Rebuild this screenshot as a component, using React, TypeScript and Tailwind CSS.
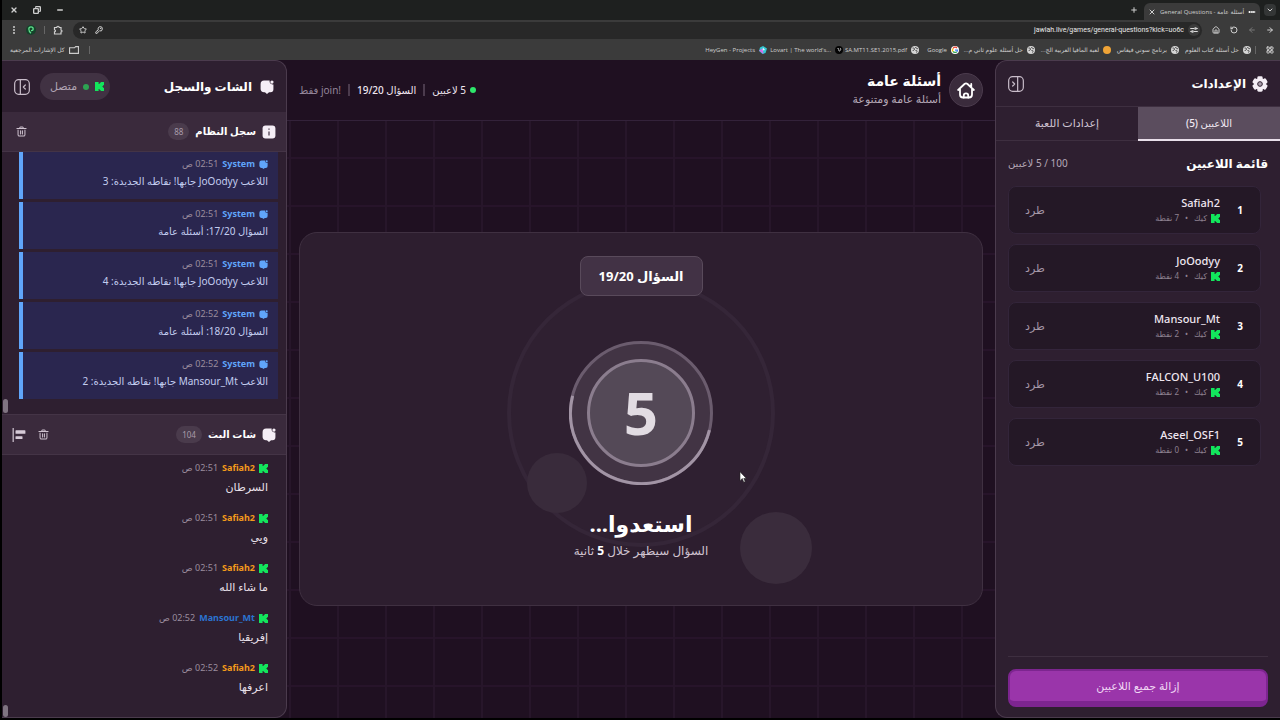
import { type ReactNode } from 'react'
import clsx from 'clsx'
import { ArrowLeft, ArrowRight, ChevronDown, Copy, House, KeyRound, LayoutGrid, Minus, Plus, RotateCcw, Star, X } from 'lucide-react'

interface Message {
  user: string
  time: string
  text: string
}

const systemLog: Message[] = [
  { user: 'System', time: '02:51 ص', text: 'اللاعب JoOodyy جابها! نقاطه الجديدة: 3' },
  { user: 'System', time: '02:51 ص', text: 'السؤال 17/20: أسئلة عامة' },
  { user: 'System', time: '02:51 ص', text: 'اللاعب JoOodyy جابها! نقاطه الجديدة: 4' },
  { user: 'System', time: '02:52 ص', text: 'السؤال 18/20: أسئلة عامة' },
  { user: 'System', time: '02:52 ص', text: 'اللاعب Mansour_Mt جابها! نقاطه الجديدة: 2' }
]

const chat: Message[] = [
  { user: 'Safiah2', time: '02:51 ص', text: 'السرطان' },
  { user: 'Safiah2', time: '02:51 ص', text: 'ويي' },
  { user: 'Safiah2', time: '02:51 ص', text: 'ما شاء الله' },
  { user: 'Mansour_Mt', time: '02:52 ص', text: 'إفريقيا' },
  { user: 'Safiah2', time: '02:52 ص', text: 'اعرفها' }
]

const userColors: Record<string, string> = {
  Safiah2: 'text-[#f59a1b]',
  Mansour_Mt: 'text-[#2b74d1]'
}

const players = [
  { name: 'Safiah2', points: 7 },
  { name: 'JoOodyy', points: 4 },
  { name: 'Mansour_Mt', points: 2 },
  { name: 'FALCON_U100', points: 2 },
  { name: 'Aseel_OSF1', points: 0 }
]

function KickLogo({ className }: { className?: string }) {
  return (
    <svg viewBox="0 0 9 9" className={className} fill="#12e65c" aria-hidden="true">
      <path d="M0 0h3.6v2h1V1h1V0H9v3.2H8v1H7v.6h1v1h1V9H5.6V8h-1V7h-1v2H0z" />
    </svg>
  )
}

function ChatIcon({ className }: { className?: string }) {
  return (
    <svg viewBox="0 0 24 24" className={className} fill="currentColor" aria-hidden="true">
      <path d="M7 1h9.500c-.8 3.500 1.500 6.500 5 6.500H23V16a5 5 0 0 1-5 5h-2.500L12 24l-3.500-3H7a6 6 0 0 1-6-5V7a6 6 0 0 1 6-6z" />
      <circle cx="20.500" cy="3.500" r="2.800" />
    </svg>
  )
}

function InfoIcon({ className }: { className?: string }) {
  return (
    <svg viewBox="0 0 24 24" className={className} aria-hidden="true">
      <rect x="1" y="1" width="22" height="22" rx="5" fill="#f5eef6" />
      <path d="M12 11v7M12 6v2" stroke="#3a2a3c" strokeWidth="2" />
    </svg>
  )
}

function GearIcon({ className }: { className?: string }) {
  return (
    <svg viewBox="0 0 24 24" className={className} fill="#f5eef6" aria-hidden="true">
      <circle cx="12" cy="12" r="9" />
      {[0, 60, 120].map((angle) => (
        <rect key={angle} x="8" y="0.500" width="8" height="23" rx="2" transform={`rotate(${angle} 12 12)`} />
      ))}
      <circle cx="12" cy="12" r="3.500" fill="#a99dab" stroke="#2e1f30" strokeWidth="1.500" />
    </svg>
  )
}

function PanelIcon({ className }: { className?: string }) {
  return (
    <svg viewBox="0 0 24 24" className={className} fill="none" stroke="#c9bdca" strokeWidth="1.800" aria-hidden="true">
      <rect x="1" y="1" width="22" height="22" rx="6" />
      <path d="M9.500 1v22" />
      <path d="m17 9-3 3 3 3" strokeLinecap="round" strokeLinejoin="round" />
    </svg>
  )
}

function TrashIcon() {
  return (
    <svg viewBox="0 0 24 24" className="h-[11px] w-[11px]" fill="none" stroke="#cfc3d0" strokeWidth="2.200" strokeLinecap="round" aria-hidden="true">
      <path d="M2 5.500h20M8 5.500C8 2.500 9 2 10 2h4c1 0 2 .5 2 3.500M4.500 9v10a3 3 0 0 0 3 3h9a3 3 0 0 0 3-3V9M10 10.500v7M14 10.500v7" />
    </svg>
  )
}

function AlignIcon() {
  return (
    <svg viewBox="0 0 24 24" className="h-3.5 w-3.5" fill="#d6cad7" aria-hidden="true">
      <path d="M1 0h2v24H1z" />
      <rect x="6" y="4" width="17" height="6" rx="1" />
      <rect x="6" y="14" width="12" height="5" rx="1" />
    </svg>
  )
}

function HomeIcon() {
  return (
    <svg viewBox="0 0 24 24" className="h-[18px] w-[18px]" fill="none" stroke="#fff" strokeWidth="2.400" strokeLinecap="round" strokeLinejoin="round" aria-hidden="true">
      <path d="M1.500 12 10 4q2-1.700 4 0l8.500 8M19 8.500V4M4 10.500V18q0 4 4 4h8q4 0 4-4v-7.500" />
      <path d="M9 22v-2.500a3 3 0 0 1 6 0V22" />
    </svg>
  )
}

function ExtensionsIcon() {
  return (
    <svg viewBox="0 0 20 20" className="h-2.5 w-2.5" fill="none" stroke="#cfcfcf" strokeWidth="2.400" aria-hidden="true">
      <path d="M3 5h4.500a2.500 2.500 0 0 1 5 0H16v5a2 2 0 0 1 0 4v4H3v-4.500a2 2 0 0 0 0-4z" />
    </svg>
  )
}

function GlobeIcon() {
  return (
    <svg viewBox="0 0 16 16" className="h-2 w-2 shrink-0" aria-hidden="true">
      <circle cx="8" cy="8" r="8" fill="#d5d5d5" />
      <path d="M3 4c3 0 5 1 4 3s-3 1-4 3M9 2c0 3 3 2 5 4M9 9c3-1 4 1 2 4" fill="none" stroke="#444" strokeWidth="2" />
    </svg>
  )
}

function GoogleIcon() {
  return (
    <svg viewBox="0 0 16 16" className="h-2 w-2 shrink-0" fill="none" strokeWidth="2.500" aria-hidden="true">
      <circle cx="8" cy="8" r="8" fill="#fff" />
      <path d="M4 5a5 5 0 0 1 8-1" stroke="#ea4335" />
      <path d="M4 11a5 5 0 0 1 0-6" stroke="#fbbc05" />
      <path d="M11.500 11.500A5 5 0 0 1 4 11" stroke="#34a853" />
      <path d="M8 8h5a5 5 0 0 1-1.500 3.500" stroke="#4285f4" />
    </svg>
  )
}

const bookmarks: { label: string; icon: ReactNode; width: string; ltr?: boolean }[] = [
  { label: 'حل أسئلة كتاب العلوم', icon: <GlobeIcon />, width: 'w-14' },
  { label: 'برنامج سوني فيغاس', icon: <GlobeIcon />, width: 'w-13' },
  {
    label: 'لعبة المافيا العربية الج...',
    icon: <span className="h-2 w-2 shrink-0 rounded-full bg-[#f0a437]" />,
    width: 'w-15'
  },
  { label: 'حل أسئلة علوم ثاني م...', icon: <GlobeIcon />, width: 'w-15' },
  { label: 'Google', icon: <GoogleIcon />, width: 'w-6', ltr: true },
  { label: 'SA.MT11.SE1.2015.pdf', icon: <GlobeIcon />, width: 'w-15', ltr: true },
  {
    label: "Lovart | The world's...",
    icon: (
      <svg viewBox="0 0 16 16" className="h-2 w-2 shrink-0" aria-hidden="true">
        <circle cx="8" cy="8" r="8" fill="#050505" />
        <path d="M5 5c4-2 1 6 4 5s3-5 1-6" fill="none" stroke="#eee" strokeWidth="1.500" />
      </svg>
    ),
    width: 'w-15',
    ltr: true
  },
  {
    label: 'HeyGen - Projects',
    icon: (
      <svg viewBox="0 0 16 16" className="h-2 w-2 shrink-0" aria-hidden="true">
        <path d="M8 0l8 5-3 9-6 2-7-6 2-7z" fill="#32c8d4" />
        <path d="M0 9l7-4 2 11z" fill="#d26be8" />
        <path d="M8 3l4 5-5 1z" fill="#e9f6ff" />
      </svg>
    ),
    width: 'w-13',
    ltr: true
  }
]

function BrowserChrome() {
  return (
    <div className="h-[60px] shrink-0 bg-[#3b3b3b] font-['Open_Sans','DejaVu_Sans',sans-serif] text-[6px] leading-3 text-[#cfcfcf]">
      <div className="flex h-5 items-end bg-[#1e201f] pl-2 pr-1">
        <button aria-label="Search tabs" className="mb-1 flex h-3 w-3 items-center justify-center rounded bg-[#343636]">
          <ChevronDown className="h-2 w-2" strokeWidth={3} />
        </button>
        <div className="ml-1.5 mr-1 flex h-[17px] w-[116px] items-center gap-1 rounded-t-md bg-[#3b3b3b] px-1">
          <svg viewBox="0 0 16 8" className="h-1 w-2" aria-hidden="true">
            <path d="M1 4h14M3 2v4M8 2v4M12 2v4" stroke="#fff" strokeWidth="2" />
          </svg>
          <span className="flex-1 whitespace-nowrap">أسئلة عامة - General Questions</span>
          <button aria-label="Close tab">
            <X className="h-2 w-2" strokeWidth={3} />
          </button>
        </div>
        <button aria-label="New tab" className="mb-1.5">
          <Plus className="h-2 w-2" strokeWidth={3} />
        </button>
        <div className="mb-1.5 mr-auto flex gap-[15px]">
          <button aria-label="Minimize">
            <Minus className="h-2 w-2" strokeWidth={4} />
          </button>
          <button aria-label="Restore">
            <Copy className="h-2 w-2 -scale-x-100" strokeWidth={4} />
          </button>
          <button aria-label="Close">
            <X className="h-2 w-2" strokeWidth={4} />
          </button>
        </div>
      </div>
      <div className="flex h-5 items-center gap-2.5 pl-2 pr-1.5">
        <button aria-label="Forward">
          <ArrowRight className="h-2 w-2" strokeWidth={3} />
        </button>
        <button aria-label="Back">
          <ArrowLeft className="h-2 w-2 text-[#777]" strokeWidth={3} />
        </button>
        <button aria-label="Reload">
          <RotateCcw className="h-2 w-2" strokeWidth={3} />
        </button>
        <button aria-label="Home">
          <House className="h-2 w-2" strokeWidth={3} />
        </button>
        <div className="flex h-[17px] flex-1 items-center gap-2 rounded-full bg-[#282828] pl-1.5 pr-0.5">
          <svg viewBox="0 0 16 16" className="h-3 w-3 rounded-full bg-[#3b3b3b]" fill="none" stroke="#ddd" strokeWidth="1.500" aria-hidden="true">
            <path d="M3 6h5M11 6h2M3 10h2M8 10h5" />
            <circle cx="10" cy="6" r="1" />
            <circle cx="6" cy="10" r="1" />
          </svg>
          <input
            aria-label="Address"
            dir="ltr"
            readOnly
            value="jawlah.live/games/general-questions?kick=uo6c"
            className="-mr-1 min-w-0 flex-1 bg-transparent text-right font-[Roboto,sans-serif] text-[7px] text-[#e8e8e8] outline-none"
          />
          <KeyRound className="h-2 w-2" strokeWidth={3} />
          <Star className="h-2 w-2" strokeWidth={3} />
        </div>
        <div className="flex items-center gap-2">
          <ExtensionsIcon />
          <div className="h-2 w-px bg-[#666]" />
          <svg viewBox="0 0 16 16" className="h-2.5 w-2.5" aria-hidden="true">
            <circle cx="8" cy="8" r="8" fill="#14432a" />
            <path d="M8 13C5 11 4.500 9 4.500 6.500a3.500 3.500 0 0 1 7 0C11.500 9 10 9 8 9" fill="none" stroke="#5fe08c" strokeWidth="2" />
          </svg>
          <button aria-label="Menu" className="flex w-2 flex-col items-center gap-px">
            <span className="h-0.5 w-0.5 rounded-full bg-[#ccc]" />
            <span className="h-0.5 w-0.5 rounded-full bg-[#ccc]" />
            <span className="h-0.5 w-0.5 rounded-full bg-[#ccc]" />
          </button>
        </div>
      </div>
      <div className="flex h-5 items-center pl-2 pr-1.5">
        <LayoutGrid className="h-2 w-2" strokeWidth={3} />
        <div className="ml-1 mr-2.5 h-2 w-px bg-[#666]" />
        {bookmarks.map((b) => (
          <a key={b.label} href="#" className="ml-1 flex shrink-0 items-center gap-1">
            {b.icon}
            <span className={clsx('flex', b.width)}>
              <span dir={b.ltr ? 'ltr' : 'rtl'} className="whitespace-nowrap">
                {b.label}
              </span>
            </span>
          </a>
        ))}
        <div className="ml-2.5 mr-auto h-2 w-px bg-[#666]" />
        <a href="#" className="flex items-center gap-1">
          <svg viewBox="0 0 18 14" className="h-2 w-2.5" fill="none" stroke="#ccc" strokeWidth="2" aria-hidden="true">
            <path d="M1 3h9l2-2h5v12H1z" />
          </svg>
          كل الإشارات المرجعية
        </a>
      </div>
    </div>
  )
}

function MessageHead({ message, system }: { message: Message; system?: boolean }) {
  return (
    <div className="flex items-center gap-1 text-[9px] leading-[14px]">
      {system ? <ChatIcon className="h-[9px] w-[9px] text-[#60a5fa]" /> : <KickLogo className="h-[9px] w-[9px]" />}
      <span className={clsx('font-bold', system ? 'text-[#60a5fa]' : userColors[message.user])}>{message.user}</span>
      <span className="text-[#9b8d9e]">{message.time}</span>
    </div>
  )
}

function ChatPanel() {
  return (
    <aside className="flex w-[285px] shrink-0 flex-col overflow-hidden rounded-r-xl border-y border-r border-[#4b3b4d] bg-[#2e1f30]">
      <div className="flex h-[51px] shrink-0 items-center px-3">
        <ChatIcon className="ml-2 h-3.5 w-3.5 text-[#f5eef6]" />
        <h2 className="text-xs font-bold">الشات والسجل</h2>
        <div className="mr-auto flex h-[27px] items-center gap-1.5 rounded-full bg-[#413243] pl-2.5 pr-1.5 text-[11px] text-[#b1a4b3]">
          <KickLogo className="h-[9px] w-[9px]" />
          <span className="h-1.5 w-1.5 rounded-full bg-[#2da352]" />
          متصل
        </div>
        <button aria-label="طي الشات" className="mr-2.5">
          <PanelIcon className="h-4 w-4" />
        </button>
      </div>
      <div className="flex h-10 shrink-0 items-center border-b border-[#443446] bg-[#3a2a3c] px-2.5 pl-3.5">
        <InfoIcon className="ml-1.5 h-3.5 w-3.5" />
        <h3 className="text-[10px] font-bold">سجل النظام</h3>
        <span className="mr-1.5 rounded-full bg-[#4a3b4c] px-1.5 text-[8px] leading-[17px] text-[#a99cab]">88</span>
        <button aria-label="مسح السجل" className="mr-auto">
          <TrashIcon />
        </button>
      </div>
      <div className="flex h-[262px] shrink-0">
        <ul className="flex flex-1 flex-col gap-[3px] overflow-hidden pl-2.5 pr-2">
          {systemLog.map((m, i) => (
            <li key={i} className="h-[47px] shrink-0 border-l-4 border-[#60a5fa] bg-[#2a264f] pr-2.5 pt-[5px] text-[10px] leading-4 text-[#c3cdf0]">
              <MessageHead message={m} system />
              <p className="mt-0.5">{m.text}</p>
            </li>
          ))}
        </ul>
        <div className="mb-px ml-px mr-px h-3.5 w-[5px] self-end rounded-full bg-[#7f7481]" />
      </div>
      <div className="flex h-[41px] shrink-0 items-center border-y border-[#443446] bg-[#3a2a3c] px-2.5">
        <ChatIcon className="ml-1.5 h-3.5 w-3.5 text-[#f5eef6]" />
        <h3 className="text-[10px] font-bold">شات البث</h3>
        <span className="mr-1.5 rounded-full bg-[#4a3b4c] px-1.5 text-[8px] leading-[17px] text-[#a99cab]">104</span>
        <button aria-label="مسح الشات" className="ml-3 mr-auto">
          <TrashIcon />
        </button>
        <button aria-label="محاذاة">
          <AlignIcon />
        </button>
      </div>
      <div className="flex min-h-0 flex-1">
        <ul className="flex flex-1 flex-col overflow-hidden pr-[18px] pt-1.5">
          {chat.map((m, i) => (
            <li key={i} className="h-[50px] shrink-0 text-[11px] leading-4 text-[#e9e0ea]">
              <MessageHead message={m} />
              <p className="mt-1">{m.text}</p>
            </li>
          ))}
        </ul>
        <div className="ml-px h-3 w-[5px] self-end rounded-full bg-[#7f7481]" />
      </div>
    </aside>
  )
}

function SettingsPanel() {
  return (
    <aside className="flex w-[285px] shrink-0 flex-col overflow-hidden rounded-l-xl border-y border-l border-[#4b3b4d] bg-[#2e1f30]">
      <div className="flex h-[45px] shrink-0 items-center px-3">
        <GearIcon className="ml-1.5 h-4 w-4" />
        <h2 className="text-xs font-bold">الإعدادات</h2>
        <button aria-label="طي الإعدادات" className="mr-auto">
          <PanelIcon className="h-4 w-4 rotate-180" />
        </button>
      </div>
      <div className="flex h-[35px] shrink-0 border-t border-[#3e2f40]">
        <button className="flex-1 border-b-2 border-[#e9dfea] bg-[#5b4d5e] text-[10px] font-medium text-[#f1e9f2]">اللاعبين (5)</button>
        <button className="flex-1 border-b border-[#3e2f40] text-[11px] text-[#cfc3d0]">إعدادات اللعبة</button>
      </div>
      <div className="flex min-h-0 flex-1 flex-col px-3 pb-2.5">
        <div className="flex h-[45px] shrink-0 items-center justify-between">
          <h3 className="text-xs font-bold">قائمة اللاعبين</h3>
          <span className="text-[10px] text-[#b5a8b7]">100 / 5 لاعبين</span>
        </div>
        <ol className="flex flex-1 flex-col gap-2.5 pr-[7px]">
          {players.map((p, i) => (
            <li key={p.name} className="flex h-12 items-center gap-3 rounded-lg border border-[#33253a] bg-[#241826] pl-4 pr-3">
              <span className="w-4 text-center text-[10px] font-bold">{i + 1}</span>
              <div className="flex-1">
                <p className="text-[11px] font-medium leading-4 text-[#efe6f0]">{p.name}</p>
                <p className="flex items-center gap-1 text-[8px] leading-[14px] text-[#8f8191]">
                  <KickLogo className="h-[9px] w-[9px]" />
                  <span>كيك</span>
                  <span className="px-0.5">•</span>
                  <span>{p.points} نقطة</span>
                </p>
              </div>
              <button className="text-[11px] text-[#a496a7]">طرد</button>
            </li>
          ))}
        </ol>
        <div className="border-t border-[#3e2f40] pt-3">
          <button className="h-[38px] w-full rounded-lg border-2 border-b-[6px] border-[#7d2590] bg-[#9a35aa] text-[11px] font-medium text-[#f0d7f4]">
            إزالة جميع اللاعبين
          </button>
        </div>
      </div>
    </aside>
  )
}

function CountdownRing() {
  return (
    <svg viewBox="0 0 144 144" className="relative h-36 w-36" aria-hidden="true">
      <circle cx="72" cy="72" r="71" fill="#423444" />
      <circle cx="72" cy="72" r="70.500" fill="none" stroke="#6b5c6e" strokeWidth="3" />
      {/* brighter arc for the elapsed part */}
      <circle cx="72" cy="72" r="70.500" fill="none" stroke="#a294a5" strokeWidth="3" pathLength="360" strokeDasharray="180 180" transform="rotate(14 72 72)" />
      <circle cx="72" cy="72" r="52.500" fill="#544957" stroke="#8b7d8e" strokeWidth="3" />
    </svg>
  )
}

function Stage() {
  return (
    <main className="flex min-w-0 flex-1 flex-col bg-[#1f1021]">
      <header className="flex h-[61px] shrink-0 items-center border-b border-[#33223a] px-3">
        <button aria-label="الرئيسية" className="flex h-[34px] w-[34px] items-center justify-center rounded-full border border-[#4b3b4d] bg-[#3a2b3c]">
          <HomeIcon />
        </button>
        <div className="mr-2 pb-0.5">
          <h1 className="text-sm font-bold leading-5">أسئلة عامة</h1>
          <p className="text-[11px] leading-4 text-[#b5a8b7]">أسئلة عامة ومتنوعة</p>
        </div>
        <div className="mr-auto flex items-center gap-[7px] text-[10px] text-[#efe6f0]">
          <span className="flex items-center gap-1">
            <span className="h-1.5 w-1.5 rounded-full bg-[#2ee66b]" />5 لاعبين
          </span>
          <span className="h-3 w-0.5 bg-[#4b3b4d]" />
          <span className="font-medium">السؤال 19/20</span>
          <span className="h-3 w-0.5 bg-[#4b3b4d]" />
          <span className="text-[#94869a]">
            <bdi dir="ltr">join!</bdi> فقط
          </span>
        </div>
      </header>
      <div className="flex flex-1 items-center bg-[linear-gradient(to_right,#27162a_2px,transparent_2px),linear-gradient(to_bottom,#27142a_2px,transparent_2px)] bg-[size:48px_48px] bg-[position:2px_36px] px-3 pb-0.5">
        <section className="relative flex w-full flex-col items-center rounded-[18px] border border-[#3f3041] bg-[#2d1e2f] pb-11 pt-[23px]">
          <div className="relative z-10 rounded-lg border border-[#594a5b] bg-[#423245] px-[18px] text-[13px] font-bold leading-[38px]">السؤال 19/20</div>
          <div className="relative mt-[45px] flex items-center justify-center">
            <div className="absolute h-[268px] w-[268px] rounded-full border-4 border-[#352638] bg-[#2f2031]" />
            <div className="absolute left-[-42px] top-28 h-[60px] w-[60px] rounded-full bg-[#392b3b]" />
            <div className="absolute left-[171px] top-[171px] h-[72px] w-[72px] rounded-full bg-[#3a2c3c]" />
            <CountdownRing />
            <span className="absolute pb-0.5 text-6xl font-bold text-[#e2dce3]">5</span>
          </div>
          <h2 className="relative mt-6 text-[22px] font-bold leading-7">استعدوا...</h2>
          <p className="relative mt-1 text-xs leading-5 text-[#cfc3d0]">
            السؤال سيظهر خلال <b className="text-white">5</b> ثانية
          </p>
          {/* mouse pointer */}
          <svg viewBox="0 0 10 16" className="absolute left-[calc(50%+98px)] top-[238px] h-3 w-2" aria-hidden="true">
            <path d="M1 1v12l3-3 2 5 2-1-2-4h3.500z" fill="#fff" stroke="#222" strokeWidth="0.800" />
          </svg>
        </section>
      </div>
    </main>
  )
}

export default function App() {
  return (
    <div dir="rtl" className="flex h-screen flex-col overflow-hidden bg-black pb-0.5 pl-0.5 font-['Noto_Sans','DejaVu_Sans',sans-serif] text-white">
      <BrowserChrome />
      <div className="flex min-h-0 flex-1 bg-[#1f1021]">
        <SettingsPanel />
        <Stage />
        <ChatPanel />
      </div>
    </div>
  )
}
